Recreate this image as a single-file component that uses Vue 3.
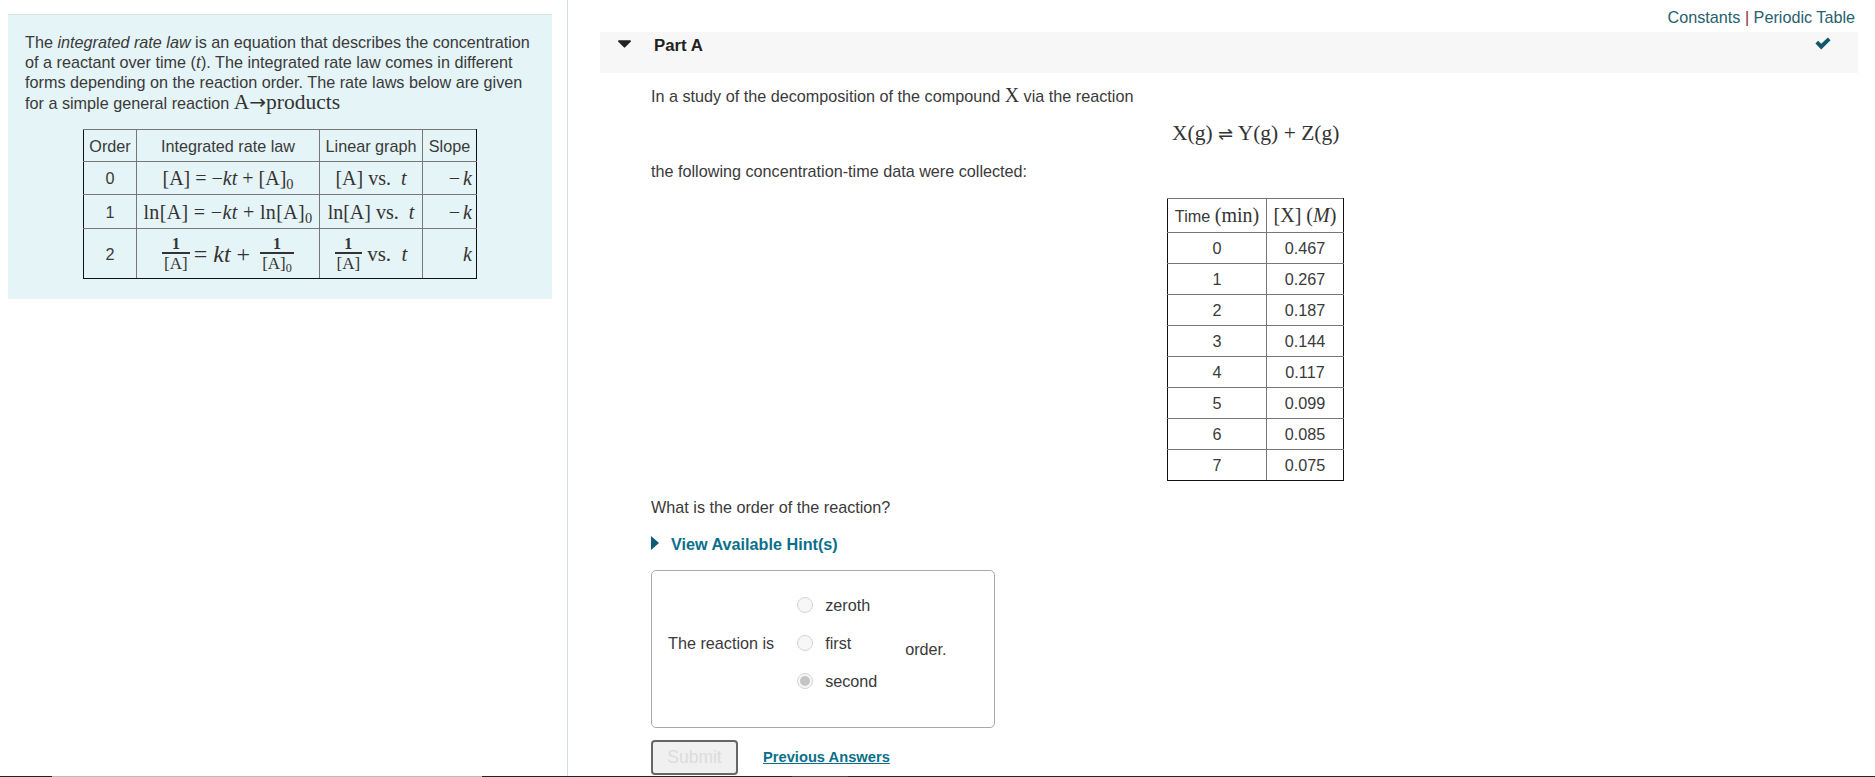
<script setup>
const rows = [
  ['0', '0.467'], ['1', '0.267'], ['2', '0.187'], ['3', '0.144'],
  ['4', '0.117'], ['5', '0.099'], ['6', '0.085'], ['7', '0.075'],
]
const options = [
  { label: 'zeroth', on: false },
  { label: 'first', on: false },
  { label: 'second', on: true },
]
</script>

<template>
  <div class="page">
    <div class="main">
      <aside class="left">
        <section class="intro">
          <p class="intro-text">The <em>integrated rate law</em> is an equation that describes the concentration of a reactant over time (<i class="m it">t</i>). The integrated rate law comes in different forms depending on the reaction order. The rate laws below are given for a simple general reaction <span class="m big">A<span class="arrow">→</span>products</span></p>
          <table class="rates">
            <colgroup><col class="c1"><col class="c2"><col class="c3"><col class="c4"></colgroup>
            <tbody>
              <tr class="r-h"><td>Order</td><td>Integrated rate law</td><td>Linear graph</td><td>Slope</td></tr>
              <tr class="r-a">
                <td>0</td>
                <td class="m">[A] = −<i>kt</i> + [A]<sub>0</sub></td>
                <td class="m">[A] vs.&nbsp; <i>t</i></td>
                <td class="m ra">−<i>k</i></td>
              </tr>
              <tr class="r-b">
                <td>1</td>
                <td class="m tight">ln[A] = −<i>kt</i> + ln[A]<sub>0</sub></td>
                <td class="m">ln[A] vs.&nbsp; <i>t</i></td>
                <td class="m ra">−<i>k</i></td>
              </tr>
              <tr class="r-c">
                <td>2</td>
                <td class="m">
                  <span class="frac"><span class="num">1</span><span class="den">[A]</span></span>
                  <span class="eq">= <i>kt</i> + </span>
                  <span class="frac"><span class="num">1</span><span class="den">[A]<sub>0</sub></span></span>
                </td>
                <td class="m">
                  <span class="frac"><span class="num">1</span><span class="den">[A]</span></span>
                  <span class="eq vs">vs.&nbsp; <i>t</i></span>
                </td>
                <td class="m ra"><i>k</i></td>
              </tr>
            </tbody>
          </table>
        </section>
      </aside>

      <main class="right">
        <div class="top-links"><a>Constants</a> <span class="sep">|</span> <a>Periodic Table</a></div>
        <header class="part">
          <svg class="caret-down" viewBox="0 0 14 8" width="13" height="8"><path d="M1 0h12a1 1 0 0 1 .7 1.7L7.7 7.6a1 1 0 0 1-1.4 0L.3 1.7A1 1 0 0 1 1 0z" /></svg>
          <strong>Part A</strong>
          <svg class="check" viewBox="0 0 18 14" width="16" height="13"><path d="M0.5 7 L3.5 4 L7 7.3 L14.5 0.3 L17.5 3.3 L7 13.7 Z" /></svg>
        </header>

        <div class="body">
          <p class="p1">In a study of the decomposition of the compound <span class="m x">X</span> via the reaction</p>
          <div class="equation m">X(g) <span class="harp">⇌</span> Y(g) + Z(g)</div>
          <p class="p2">the following concentration-time data were collected:</p>
          <table class="data">
            <colgroup><col class="d1"><col class="d2"></colgroup>
            <thead>
              <tr><th>Time <span class="m mm">(min)</span></th><th><span class="m mm">[X] (<i>M</i>)</span></th></tr>
            </thead>
            <tbody>
              <tr v-for="row in rows" :key="row[0]"><td>{{ row[0] }}</td><td>{{ row[1] }}</td></tr>
            </tbody>
          </table>
          <p class="q">What is the order of the reaction?</p>
          <div class="hint">
            <svg viewBox="0 0 8 14" width="8" height="14"><path d="M0 0l8 7-8 7z" /></svg>
            <span>View Available Hint(s)</span>
          </div>
          <div class="answer">
            <span class="lead">The reaction is</span>
            <div class="opts">
              <label v-for="o in options" :key="o.label" class="opt">
                <span class="radio" :class="{ on: o.on }"></span>{{ o.label }}
              </label>
            </div>
            <span class="tail">order.</span>
          </div>
          <div class="actions">
            <button class="submit" disabled>Submit</button>
            <a class="prev">Previous Answers</a>
          </div>
        </div>
      </main>
    </div>
    <div class="strip">
      <span class="s1"></span><span class="s2"></span><span class="s3"></span><span class="s4"></span><span class="s5"></span>
    </div>
  </div>
</template>

<style>
html, body { margin: 0; background: #fff; }
</style>

<style scoped>
.page { width: 1875px; height: 777px; overflow: hidden; display: flex; flex-direction: column; font-family: "Liberation Sans", Arial, sans-serif; font-size: 16.2px; line-height: 20px; color: #3a3a3a; }
.main { flex: 1; min-height: 0; display: flex; }
.left { width: 568px; flex: none; border-right: 1px solid #d3dde6; padding: 14px 0 0 8px; box-sizing: border-box; }
.intro { width: 544px; height: 285px; box-sizing: border-box; border-top: 1px solid #d4e4e6; background: #e5f4f6; padding: 17px 17px 0; }
.intro-text { margin: 0; }
.m { font-family: "Liberation Serif", "Times New Roman", serif; color: #333; }
.big { font-size: 21.5px; }
.arrow { font-family: "DejaVu Sans", sans-serif; font-size: 20px; }
.it { font-size: 18px; }
.rates { border-collapse: collapse; table-layout: fixed; width: 393px; margin: 16px 0 0 58px; border: 1px solid #111; }
.c1 { width: 53px; } .c2 { width: 183px; } .c3 { width: 103px; } .c4 { width: 54px; }
.rates td { border: 1px solid #777; text-align: center; padding: 0 2px; white-space: nowrap; }
.rates tr td:first-child { border-left-color: #111; }
.rates tr td:last-child { border-right-color: #111; }
.rates tr:last-child td { border-bottom-color: #111; }
.rates td.m { font-size: 20px; }
.rates td.tight { padding: 0; font-size: 20px; letter-spacing: 0.35px; }
.rates td.ra { text-align: right; padding-right: 1px; letter-spacing: 3px; }
.r-h { height: 32px; } .r-a { height: 33px; } .r-b { height: 34px; } .r-c { height: 50px; }
sub { font-size: 0.72em; line-height: 0; vertical-align: -0.25em; }
.frac { display: inline-flex; flex-direction: column; align-items: center; vertical-align: middle; font-size: 17px; line-height: 16px; }
.num { padding: 0 2px; font-size: 16px; font-weight: bold; }
.den { border-top: 2px solid #333; padding: 2px 2px 0; }
.eq { font-size: 24px; vertical-align: middle; margin: 0 4px; }
.eq.vs { font-size: 21px; margin: 0 0 0 5px; }
.right { flex: 1; min-width: 0; display: flex; flex-direction: column; padding: 7px 17px 0 32px; }
.top-links { text-align: right; color: #27606f; padding-right: 3px; height: 25px; }
.sep { color: #8c2f3c; }
.part { height: 41px; flex: none; background: #f7f7f7; display: flex; align-items: flex-start; padding: 0 27px 0 18px; box-sizing: border-box; }
.part strong { color: #222; margin: 4px 0 0 23px; line-height: 20px; font-size: 16.8px; }
.caret-down { fill: #222; margin-top: 8px; }
.check { fill: #14576b; margin: 5px 0 0 auto; }
.body { padding-left: 51px; }
.p1 { margin: 12px 0 0; }
.x { font-size: 20px; }
.equation { font-size: 21.5px; margin: 15px 0 0; padding-left: 521px; line-height: 24px; white-space: nowrap; }
.harp { font-family: "DejaVu Sans", sans-serif; font-size: 18px; color: #333; }
.p2 { margin: 15px 0 0; }
.data { border-collapse: collapse; table-layout: fixed; width: 176px; margin: 17px 0 0 516px; border: 1px solid #111; }
.d1 { width: 99px; } .d2 { width: 77px; }
.data th, .data td { border: 1px solid #777; text-align: center; font-weight: normal; padding: 0; }
.data th { height: 33px; white-space: nowrap; }
.data td { height: 30px; }
.data tr th:first-child, .data tr td:first-child { border-left-color: #111; }
.data tr th:last-child, .data tr td:last-child { border-right-color: #111; }
.data tbody tr:last-child td { border-bottom-color: #111; }
.mm { font-size: 20px; }
.q { margin: 16px 0 0; }
.hint { margin-top: 17px; display: flex; align-items: center; gap: 12px; color: #0b6f8b; font-weight: bold; }
.hint svg { fill: #0b5c78; margin-top: -2px; }
.answer { margin-top: 16px; width: 344px; height: 158px; box-sizing: border-box; border: 1px solid #aaa; border-radius: 5px; display: flex; align-items: center; padding-left: 16px; }
.lead { margin-right: 23px; margin-top: -12px; }
.opts { display: flex; flex-direction: column; gap: 18px; margin-top: -13px; width: 108px; }
.opt { display: flex; align-items: center; gap: 12px; }
.radio { width: 14px; height: 14px; border: 1px solid #d4d4d4; border-radius: 50%; background: #f7f7f7; display: flex; align-items: center; justify-content: center; }
.radio.on::after { content: ""; width: 10px; height: 10px; border-radius: 50%; background: #c4c4c4; }
.tail { margin-top: -1px; }
.actions { margin-top: 12px; display: flex; align-items: center; gap: 25px; }
.submit { width: 87px; height: 35px; box-sizing: border-box; border: 2px solid #666; border-radius: 4px; background: #f0f0f0; color: #dcdcdc; font: 17.5px "Liberation Sans", Arial, sans-serif; padding: 0; }
.prev { color: #0b6f8b; font-weight: bold; text-decoration: underline; font-size: 14.7px; margin-top: -2px; }
.strip { height: 1px; flex: none; display: flex; background: #222; }
.strip span { display: block; }
.s1 { width: 52px; background: #222; } .s2 { width: 430px; background: #bbb; } .s3 { width: 310px; background: #222; } .s4 { width: 56px; background: #444; } .s5 { flex: 1; background: #2a2620; }
</style>
